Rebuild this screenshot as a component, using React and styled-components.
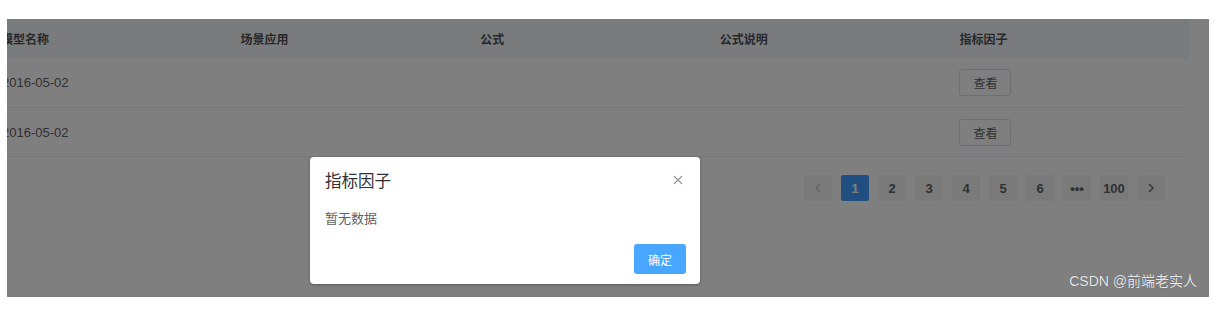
import React from "react";
import styled, { createGlobalStyle } from "styled-components";

const GlobalStyle = createGlobalStyle`
  html, body {
    margin: 0;
    padding: 0;
    background: #fff;
    font-family: "Liberation Sans", "Noto Sans CJK SC", sans-serif;
  }
`;

const columns = ["模型名称", "场景应用", "公式", "公式说明", "指标因子"];
const rows = [
  { date: "2016-05-02", height: 50 },
  { date: "2016-05-02", height: 49 },
];
const pages = ["1", "2", "3", "4", "5", "6", "more", "100"];

const Page = styled.div`
  padding: 19px 0 0 7px;
  height: 313px;
  box-sizing: border-box;
`;

const Screen = styled.div`
  position: relative;
  width: 1202px;
  height: 278px;
  overflow: hidden;
  background: #fff;
`;

const Table = styled.div`
  width: 1198px;
  margin-left: -16px;
  display: flex;
  flex-direction: column;
`;

const Row = styled.div`
  display: grid;
  grid-template-columns: repeat(5, 1fr);
  align-items: center;
  height: ${(p) => p.$h}px;
  box-sizing: border-box;
  border-bottom: 1px solid #ebeef5;
  background: ${(p) => (p.$head ? "#f5f7fa" : "#fff")};
`;

const Cell = styled.div`
  padding-left: ${(p) => (p.$head ? "10px" : "11px")};
  font-size: ${(p) => (p.$head ? "12px" : "13px")};
  font-weight: ${(p) => (p.$head ? 700 : 400)};
  color: ${(p) => (p.$head ? "#505256" : "#606266")};
  white-space: nowrap;
`;

const SmallButton = styled.button`
  width: 52px;
  height: 27px;
  padding: 0;
  margin-left: -1px;
  border: 1px solid #dcdfe6;
  border-radius: 3px;
  background: #fff;
  color: #606266;
  font-family: inherit;
  font-size: 12px;
`;

const Pager = styled.div`
  display: flex;
  justify-content: flex-end;
  gap: 9px;
  padding: 18px 44px 0 0;
`;

const PageBtn = styled.div`
  width: 28px;
  height: 26px;
  border-radius: 2px;
  display: flex;
  align-items: center;
  justify-content: center;
  background: ${(p) => (p.$active ? "#409eff" : "#f4f4f5")};
  color: ${(p) => (p.$active ? "#fff" : p.$disabled ? "#c0c4cc" : "#606266")};
  font-size: 13px;
  font-weight: 700;
`;

const Mask = styled.div`
  position: absolute;
  inset: 0;
  background: rgba(0, 0, 0, 0.5);
`;

const Dialog = styled.div`
  position: absolute;
  left: 303px;
  top: 138px;
  width: 390px;
  height: 127px;
  box-sizing: border-box;
  background: #fff;
  border-radius: 4px;
  box-shadow: 0 1px 3px rgba(0, 0, 0, 0.3);
  padding: 13px 14px 10px 15px;
  display: flex;
  flex-direction: column;
`;

const DialogHeader = styled.div`
  display: flex;
  justify-content: space-between;
  align-items: center;
  height: 20px;
`;

const Title = styled.span`
  font-size: 16.5px;
  color: #303133;
`;

const Close = styled.svg`
  width: 10px;
  height: 10px;
  margin-right: 3px;
`;

const Body = styled.div`
  margin-top: 18px;
  font-size: 13px;
  color: #606266;
`;

const Footer = styled.div`
  margin-top: auto;
  display: flex;
  justify-content: flex-end;
`;

const Primary = styled.button`
  width: 52px;
  height: 30px;
  padding: 0;
  border: none;
  border-radius: 3px;
  background: #48a6ff;
  color: #fff;
  font-family: inherit;
  font-size: 12px;
`;

const Watermark = styled.div`
  position: absolute;
  right: 12px;
  bottom: 7px;
  font-size: 14px;
  color: #e6e6e6;
  text-shadow: 0 0 1px rgba(0, 0, 0, 0.4);
`;

const Arrow = ({ dir }) => (
  <svg width="8" height="10" viewBox="0 0 8 10">
    <polyline
      points={dir === "left" ? "6,1 2,5 6,9" : "2,1 6,5 2,9"}
      fill="none"
      stroke="currentColor"
      strokeWidth="1.4"
    />
  </svg>
);

const App = () => {
  return (
    <>
      <GlobalStyle />
      <Page>
        <Screen>
          <Table>
            <Row $head $h={39}>
              {columns.map((c) => (
                <Cell $head key={c}>
                  {c}
                </Cell>
              ))}
            </Row>
            {rows.map((r, i) => (
              <Row key={i} $h={r.height}>
                <Cell>{r.date}</Cell>
                <Cell />
                <Cell />
                <Cell />
                <Cell>
                  <SmallButton>查看</SmallButton>
                </Cell>
              </Row>
            ))}
          </Table>

          <Pager>
            <PageBtn $disabled>
              <Arrow dir="left" />
            </PageBtn>
            {pages.map((p) => (
              <PageBtn key={p} $active={p === "1"}>
                {p === "more" ? "•••" : p}
              </PageBtn>
            ))}
            <PageBtn>
              <Arrow dir="right" />
            </PageBtn>
          </Pager>

          <Mask />

          <Dialog>
            <DialogHeader>
              <Title>指标因子</Title>
              <Close viewBox="0 0 10 10">
                <path d="M1 1L9 9M9 1L1 9" stroke="#909399" strokeWidth="1.1" />
              </Close>
            </DialogHeader>
            <Body>暂无数据</Body>
            <Footer>
              <Primary>确定</Primary>
            </Footer>
          </Dialog>

          <Watermark>CSDN @前端老实人</Watermark>
        </Screen>
      </Page>
    </>
  );
};

export default App;
